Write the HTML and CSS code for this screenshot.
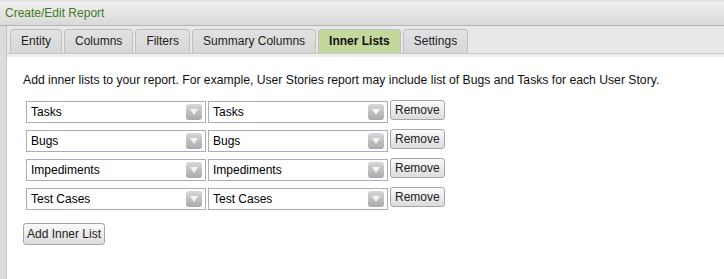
FILE: index.html
```html
<!DOCTYPE html>
<html lang="en">
<head>
    <meta charset="UTF-8">
    <title>Create/Edit Report</title>
    <link rel="stylesheet" href="styles.css">
</head>
<body>
    <div class="header">Create/Edit Report</div>

    <div class="window">
        <div class="panel">
            <div class="tabs">
                <div class="tab">Entity</div>
                <div class="tab">Columns</div>
                <div class="tab">Filters</div>
                <div class="tab">Summary Columns</div>
                <div class="tab active">Inner Lists</div>
                <div class="tab">Settings</div>
            </div>
            <div class="tabs-gap"></div>

            <div class="content">
                <p class="hint">Add inner lists to your report. For example, User Stories report may include list of Bugs and Tasks for each User Story.</p>

                <div class="list-row">
                    <div class="combo"><span>Tasks</span><i class="arrow"></i></div>
                    <div class="combo"><span>Tasks</span><i class="arrow"></i></div>
                    <button class="btn">Remove</button>
                </div>
                <div class="list-row">
                    <div class="combo"><span>Bugs</span><i class="arrow"></i></div>
                    <div class="combo"><span>Bugs</span><i class="arrow"></i></div>
                    <button class="btn">Remove</button>
                </div>
                <div class="list-row">
                    <div class="combo"><span>Impediments</span><i class="arrow"></i></div>
                    <div class="combo"><span>Impediments</span><i class="arrow"></i></div>
                    <button class="btn">Remove</button>
                </div>
                <div class="list-row">
                    <div class="combo"><span>Test Cases</span><i class="arrow"></i></div>
                    <div class="combo"><span>Test Cases</span><i class="arrow"></i></div>
                    <button class="btn">Remove</button>
                </div>

                <button class="btn add-btn">Add Inner List</button>
            </div>
        </div>
    </div>
</body>
</html>
```

FILE: styles.css
```css
body {
    font-family: "Liberation Sans", Arial, sans-serif;
    font-size: 12px;
    margin: 0;
    background: #dcdcdc;
    height: 100vh;
    display: flex;
    flex-direction: column;
    overflow: hidden;
}
.header {
    height: 23px;
    flex-shrink: 0;
    border-top: 2px solid #e4e4e4;
    border-bottom: 1px solid #b4b4b4;
    background: linear-gradient(#f0f0f0, #d9d9d9);
    color: #3d7c1f;
    padding-left: 5px;
    line-height: 22px;
}
.window {
    flex: 1;
    display: flex;
    padding-left: 6px;
}
.panel {
    flex: 1;
    border-left: 1px solid #c4c4c4;
    background: #fff;
}
.tabs {
    display: flex;
    gap: 2px;
    padding: 3px 3px 0;
    background: #e8e8e8;
    border-bottom: 1px solid #c8c8c8;
}
.tab {
    height: 23px;
    line-height: 23px;
    padding: 0 10px;
    border: 1px solid #c0c0c0;
    border-bottom: none;
    border-radius: 4px 4px 0 0;
    background: linear-gradient(#e2e2e2, #d6d6d6);
    color: #222;
}
.tab.active {
    background: #c4d89c;
    font-weight: bold;
    color: #111;
}
.tabs-gap {
    height: 3px;
    background: #eeeeee;
}
.content {
    padding: 15px 16px 20px;
}
.hint {
    margin: 0 0 12px;
    line-height: 16px;
    font-size: 12.2px;
    color: #111;
}
.list-row {
    display: flex;
    align-items: flex-start;
    gap: 2px;
    margin: 0 0 6px 3px;
}
.combo {
    width: 180px;
    height: 22px;
    box-sizing: border-box;
    border: 1px solid #abaac4;
    margin-top: 1px;
    display: flex;
    align-items: center;
    justify-content: space-between;
    padding: 0 3px 0 4px;
    background: #fff;
    color: #000;
}
.arrow {
    width: 16px;
    height: 16px;
    border-radius: 3px;
    background: linear-gradient(#d8d8d8, #a9a9a9);
    position: relative;
}
.arrow::after {
    content: "";
    position: absolute;
    left: 4px;
    top: 5px;
    border-left: 4px solid transparent;
    border-right: 4px solid transparent;
    border-top: 6px solid #f4f4f4;
}
.btn {
    font-family: "Liberation Sans", Arial, sans-serif;
    font-size: 12px;
    height: 20px;
    padding: 0 4px;
    border: 1px solid #a6a6a6;
    border-radius: 3px;
    background: linear-gradient(#fbfbfb, #dcdcdc);
    color: #222;
}
.add-btn {
    height: 22px;
    margin-top: 7px;
    padding: 0 3px;
}
```
